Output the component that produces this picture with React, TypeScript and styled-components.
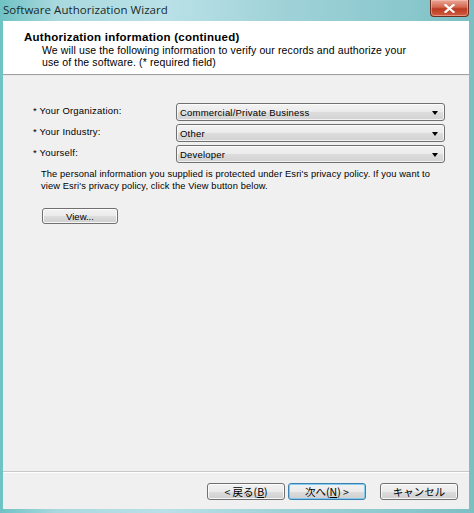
import { createGlobalStyle, styled } from 'styled-components';

const GlobalStyle = createGlobalStyle`
  html, body {
    margin: 0;
    padding: 0;
  }
  body {
    font-family: "Liberation Sans", Arial, sans-serif;
    background: #5fb8bb;
  }
`;

const Window = styled.div`
  width: 474px;
  height: 513px;
  box-sizing: border-box;
  display: flex;
  flex-direction: column;
  padding: 0 5px 4px 3px;
  background: linear-gradient(90deg, #6fc2c4 0%, #a9d9df 12%, #b9e1e7 35%, #9fd2d8 60%, #8ac8cd 85%, #7cbfc3 100%);
`;

const TitleBar = styled.div`
  height: 21px;
  display: flex;
  align-items: flex-start;
  justify-content: space-between;
  margin-left: -3px;
  margin-right: -5px;
  padding-left: 3px;
  padding-right: 5px;
`;

const Title = styled.div`
  font-family: "Open Sans", "Liberation Sans", sans-serif;
  font-size: 11.5px;
  line-height: 19px;
  color: #1a2a2a;
  letter-spacing: 0.05px;
`;

const CloseButton = styled.div`
  width: 39px;
  height: 17px;
  box-sizing: border-box;
  border: 1px solid #6b2f22;
  border-top: none;
  border-radius: 0 0 4px 4px;
  background: linear-gradient(#e9a898 0%, #d3674f 45%, #bb3a22 55%, #cf5d3f 100%);
  display: flex;
  align-items: center;
  justify-content: center;
  box-shadow: inset 0 0 0 1px rgba(255, 200, 190, 0.5);
`;

const Client = styled.div`
  flex: 1;
  display: flex;
  flex-direction: column;
  background: #f0f0f0;
`;

const Header = styled.div`
  height: 54px;
  box-sizing: border-box;
  background: #ffffff;
  padding: 9px 0 0 21px;
  border-bottom: 1px solid #a0a0a0;
  box-shadow: 0 1px 0 #e8e8e8;
`;

const HeaderTitle = styled.div`
  font-size: 11.5px;
  font-weight: bold;
  line-height: 14px;
  color: #000;
  letter-spacing: 0.25px;
`;

const HeaderText = styled.div`
  font-size: 10.5px;
  line-height: 12px;
  color: #000;
  padding-left: 18px;
  letter-spacing: 0.12px;
`;

const Body = styled.div`
  flex: 1;
  padding: 28px 24px 0 30px;
  display: flex;
  flex-direction: column;
`;

const Fields = styled.div`
  display: flex;
  flex-direction: column;
  gap: 3px;
`;

const Row = styled.div`
  display: grid;
  grid-template-columns: 143px 1fr;
  align-items: center;
`;

const Label = styled.div`
  font-size: 9.5px;
  color: #000;
  padding-bottom: 4px;
  letter-spacing: 0.2px;
`;

const Combo = styled.div`
  height: 18px;
  box-sizing: border-box;
  border: 1px solid #707070;
  border-radius: 3px;
  background: linear-gradient(#f3f3f3 0%, #ebebeb 50%, #dddddd 51%, #d2d2d2 100%);
  display: flex;
  align-items: center;
  justify-content: space-between;
  padding: 0 6px 0 3px;
  font-size: 9.5px;
  color: #000;
  letter-spacing: 0.2px;
  box-shadow: inset 0 0 0 1px rgba(255, 255, 255, 0.7);
`;

const Arrow = styled.span`
  width: 0;
  height: 0;
  border-left: 3.5px solid transparent;
  border-right: 3.5px solid transparent;
  border-top: 4px solid #000;
  margin-top: 2px;
`;

const Note = styled.p`
  margin: 5px 0 0 8px;
  font-size: 9.3px;
  line-height: 12px;
  color: #000;
  letter-spacing: 0.12px;
`;

const Button = styled.div<{ $default?: boolean; $width?: number }>`
  width: ${(p) => p.$width ?? 78}px;
  height: 17px;
  box-sizing: border-box;
  border: 1px solid ${(p) => (p.$default ? '#3c7fb1' : '#707070')};
  border-radius: 3px;
  background: linear-gradient(#f2f2f2 0%, #ebebeb 50%, #dddddd 51%, #cfcfcf 100%);
  box-shadow: inset 0 0 0 1px ${(p) => (p.$default ? 'rgba(120, 200, 240, 0.9)' : 'rgba(255, 255, 255, 0.8)')};
  display: flex;
  align-items: center;
  justify-content: center;
  font-size: 9.5px;
  color: #000;
`;

const ViewButton = styled(Button)`
  margin: 16px 0 0 9px;
  height: 16px;
`;

const Footer = styled.div`
  height: 38px;
  box-sizing: border-box;
  border-top: 1px solid #c8c8c8;
  box-shadow: inset 0 1px 0 #ffffff;
  display: flex;
  align-items: flex-start;
  justify-content: flex-end;
  padding: 11px 11px 0 0;
  gap: 3px;
`;

const JpText = styled.span`
  font-family: "Noto Sans CJK JP", "Liberation Sans", sans-serif;
  font-size: 10.5px;
  line-height: 12px;
`;

const U = styled.span`
  text-decoration: underline;
`;

const CancelButton = styled(Button)`
  margin-left: 11px;
`;

const fields = [
  { label: '* Your Organization:', value: 'Commercial/Private Business' },
  { label: '* Your Industry:', value: 'Other' },
  { label: '* Yourself:', value: 'Developer' },
];

const App = () => (
  <>
    <GlobalStyle />
    <Window>
      <TitleBar>
        <Title>Software Authorization Wizard</Title>
        <CloseButton>
          <svg width="11" height="9" viewBox="0 0 11 9">
            <path d="M1.5 1 L9.5 8 M9.5 1 L1.5 8" stroke="#ffffff" strokeWidth="2.2" strokeLinecap="square" />
          </svg>
        </CloseButton>
      </TitleBar>
      <Client>
        <Header>
          <HeaderTitle>Authorization information (continued)</HeaderTitle>
          <HeaderText>
            We will use the following information to verify our records and authorize your
            <br />
            use of the software. (* required field)
          </HeaderText>
        </Header>
        <Body>
          <Fields>
            {fields.map((f) => (
              <Row key={f.label}>
                <Label>{f.label}</Label>
                <Combo>
                  <span>{f.value}</span>
                  <Arrow />
                </Combo>
              </Row>
            ))}
          </Fields>
          <Note>
            The personal information you supplied is protected under Esri's privacy policy. If you want to
            <br />
            view Esri's privacy policy, click the View button below.
          </Note>
          <ViewButton $width={76}>View...</ViewButton>
        </Body>
        <Footer>
          <Button>
            <JpText>
              &lt; 戻る(<U>B</U>)
            </JpText>
          </Button>
          <Button $default>
            <JpText>
              次へ(<U>N</U>) &gt;
            </JpText>
          </Button>
          <CancelButton>
            <JpText>キャンセル</JpText>
          </CancelButton>
        </Footer>
      </Client>
    </Window>
  </>
);

export default App;
